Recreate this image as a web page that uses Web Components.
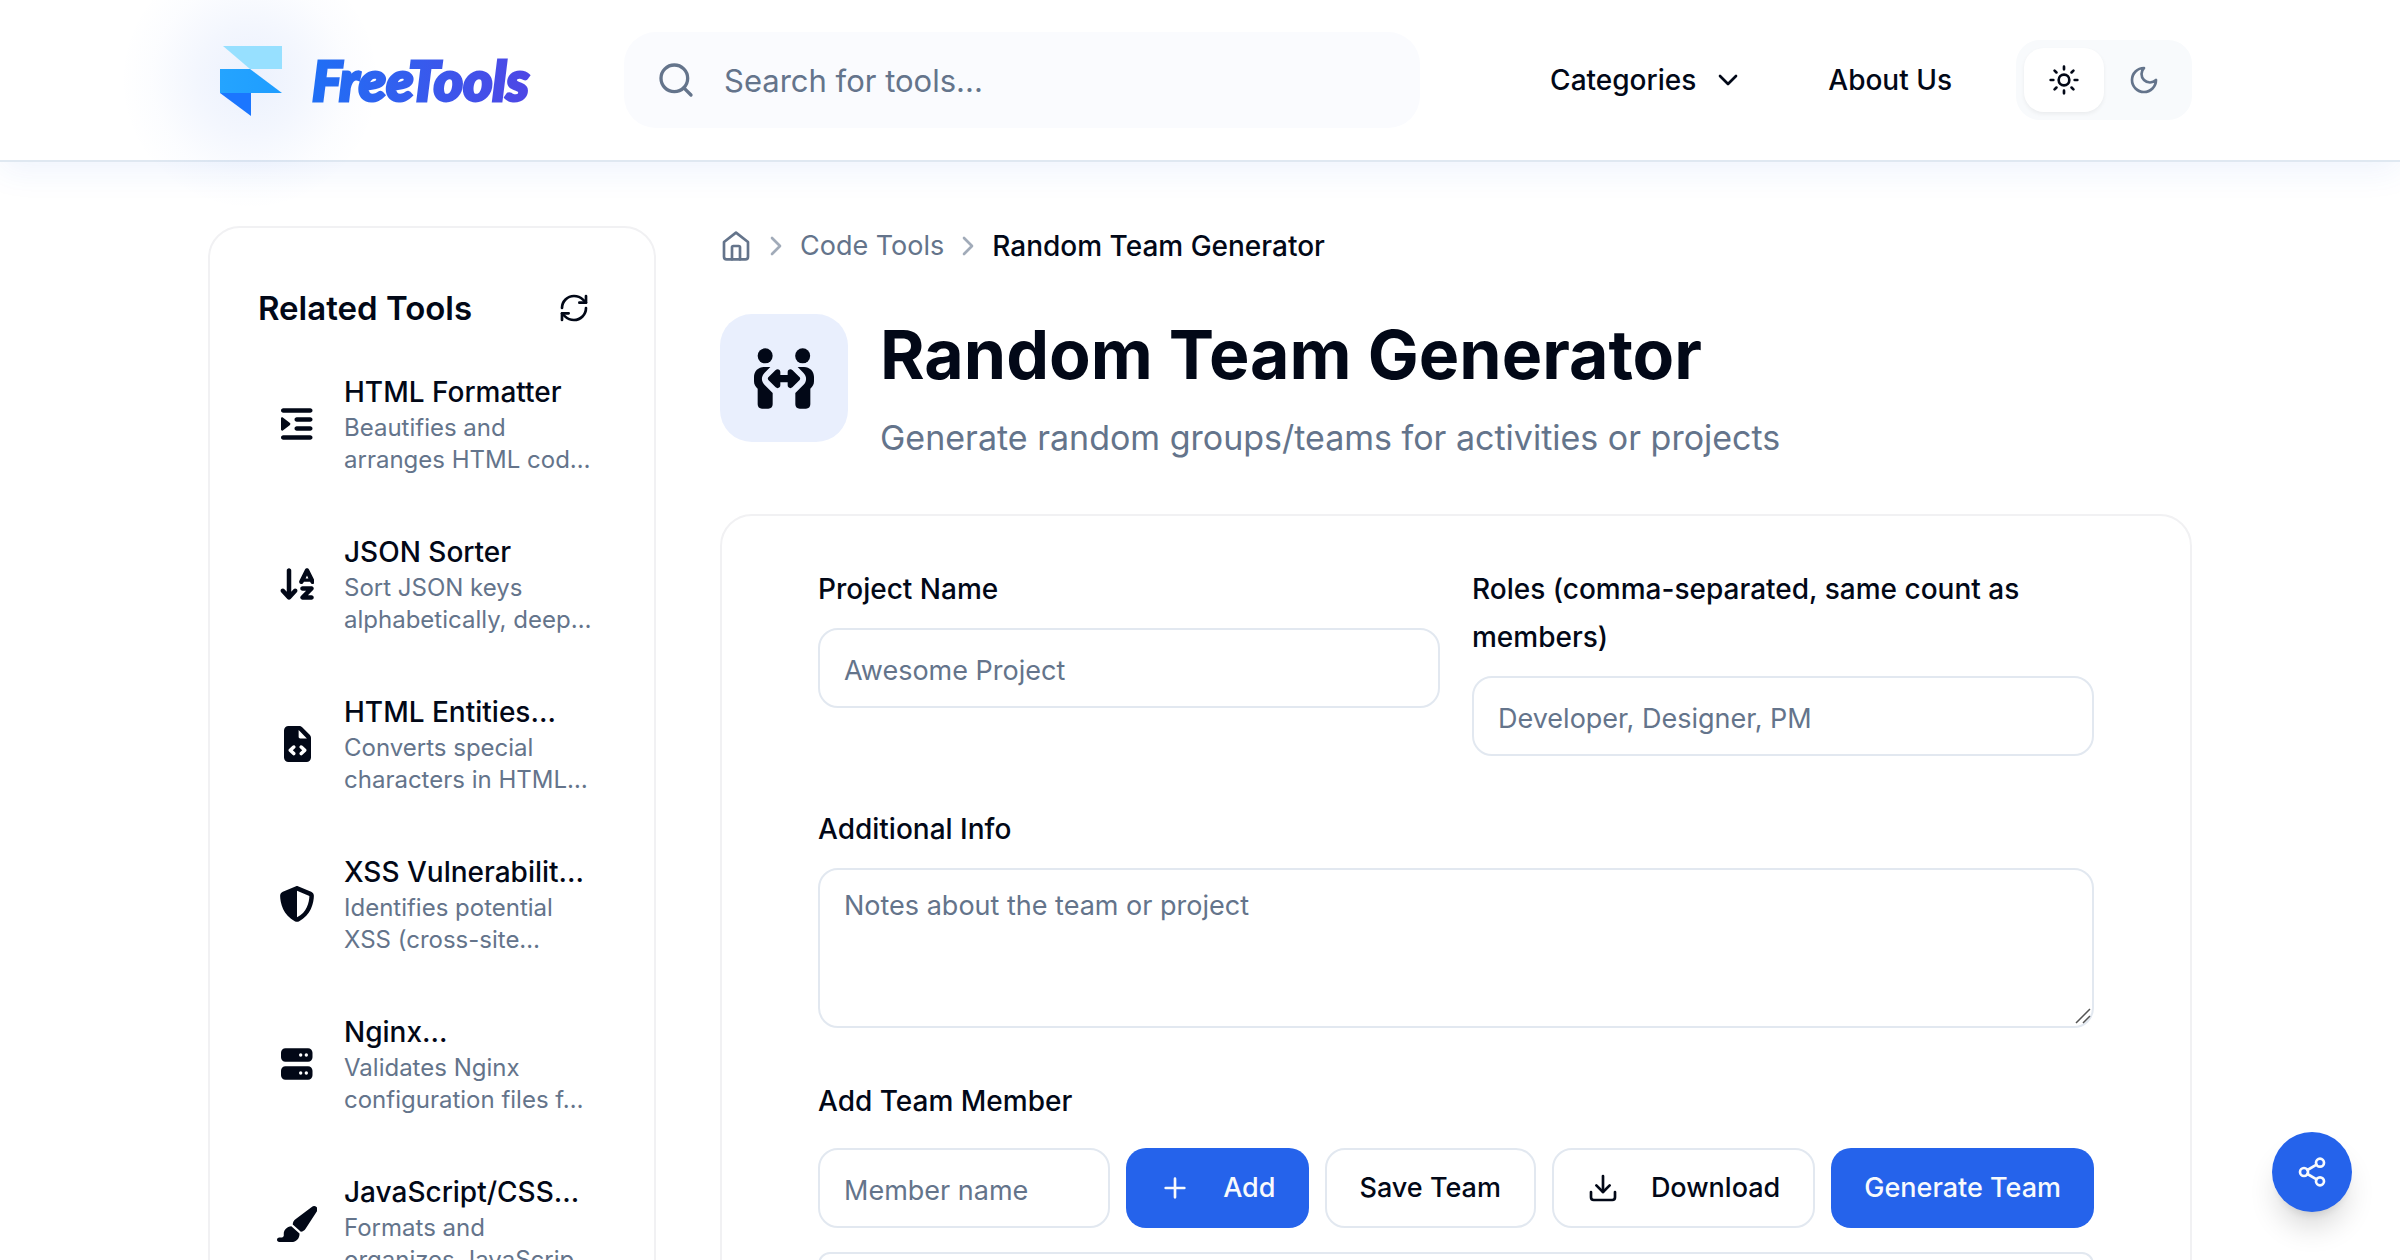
<!DOCTYPE html>
<html lang="en">

<head>
    <meta charset="UTF-8">
    <meta name="viewport" content="width=device-width, initial-scale=1.0">
    <title>Random Team Generator - FreeTools</title>
    <style>
        :root {
            --primary: #2563eb;
            --ink: #020817;
            --muted: #64748b;
            --line: #e2e8f0;
            --card-line: #f1f1f3;
        }

        body {
            margin: 0;
            font-family: Inter, "Liberation Sans", sans-serif;
            font-size: 32px;
            line-height: 48px;
            color: var(--ink);
            background: #fff;
        }

        main {
            display: grid;
            grid-template-columns: 448px minmax(0, 1fr);
            gap: 64px;
            align-items: start;
            box-sizing: border-box;
            max-width: 2048px;
            margin: 0 auto;
            padding: 64px 32px;
        }
    </style>
</head>

<body>

    <site-header></site-header>

    <main>
        <related-tools>
            <tool-item icon="indent">
                HTML Formatter
                <span slot="desc">Beautifies and<br>arranges HTML cod…</span>
            </tool-item>
            <tool-item icon="sort">
                JSON Sorter
                <span slot="desc">Sort JSON keys<br>alphabetically, deep…</span>
            </tool-item>
            <tool-item icon="file-code">
                HTML Entities…
                <span slot="desc">Converts special<br>characters in HTML…</span>
            </tool-item>
            <tool-item icon="shield">
                XSS Vulnerabilit…
                <span slot="desc">Identifies potential<br>XSS (cross-site…</span>
            </tool-item>
            <tool-item icon="server">
                Nginx…
                <span slot="desc">Validates Nginx<br>configuration files f…</span>
            </tool-item>
            <tool-item icon="brush">
                JavaScript/CSS…
                <span slot="desc">Formats and<br>organizes JavaScrip…</span>
            </tool-item>
        </related-tools>

        <tool-page>
            <bread-crumb></bread-crumb>
            <tool-heading icon="people">
                Random Team Generator
                <span slot="desc">Generate random groups/teams for activities or projects</span>
            </tool-heading>
            <team-form></team-form>
        </tool-page>
    </main>

    <share-button></share-button>

    <!-- header -->
    <template id="site-header-tpl">
        <style>
            * {
                box-sizing: border-box;
            }

            :host {
                display: block;
                position: relative;
                border-bottom: 2px solid #dfe8f1;
                box-shadow: 0 8px 32px rgba(37, 99, 235, .08);
            }

            header {
                display: flex;
                align-items: center;
                max-width: 2048px;
                height: 160px;
                margin: 0 auto;
                padding: 0 32px;
            }

            a {
                color: inherit;
                text-decoration: none;
            }

            .logo {
                position: relative;
                display: flex;
                align-items: center;
                gap: 24px;
                width: 416px;
                padding-left: 8px;
            }

            /* soft halo behind the mark */
            .logo::before {
                content: "";
                position: absolute;
                left: -88px;
                top: 50%;
                width: 260px;
                height: 260px;
                margin-top: -130px;
                border-radius: 50%;
                background: radial-gradient(closest-side, rgba(37, 99, 235, .09), rgba(37, 99, 235, .055) 40%, rgba(37, 99, 235, .015) 75%, rgba(37, 99, 235, 0));
                pointer-events: none;
            }

            .mark {
                position: relative;
                width: 72px;
                height: 72px;
            }

            .word {
                position: relative;
                padding-right: 4px;
                font: italic 900 56px/64px Lato, sans-serif;
                background: linear-gradient(90deg, #1f6ff5, #4f46e5);
                -webkit-background-clip: text;
                background-clip: text;
                -webkit-text-stroke: 3px transparent;
                color: transparent;
            }

            .search {
                display: flex;
                align-items: center;
                gap: 28px;
                flex: 0 1 796px;
                height: 96px;
                padding: 0 32px;
                border-radius: 32px;
                background: #fafbfe;
                color: var(--muted);
            }

            .search input {
                flex: 1;
                min-width: 0;
                padding: 2px 0 0;
                border: 0;
                outline: 0;
                background: none;
                font: inherit;
                font-size: 31px;
                color: var(--ink);
            }

            .search input::placeholder {
                color: var(--muted);
                opacity: 1;
            }

            nav {
                display: flex;
                align-items: center;
                margin-left: auto;
                font-size: 28px;
                line-height: 40px;
                font-weight: 500;
            }

            nav button {
                display: flex;
                align-items: center;
                gap: 16px;
                padding: 0;
                border: 0;
                background: none;
                font: inherit;
                color: inherit;
            }

            nav a {
                margin: 0 64px 0 84px;
            }

            .theme {
                display: flex;
                padding: 8px;
                border-radius: 24px;
                background: #f8fafc;
            }

            .theme button {
                justify-content: center;
                width: 80px;
                height: 64px;
                border-radius: 20px;
                color: var(--muted);
            }

            .theme button[aria-pressed=true] {
                background: #fff;
                color: var(--ink);
                box-shadow: 0 2px 4px rgba(0, 0, 0, .06);
            }
        </style>
        <header>
            <a class="logo" href="#">
                <svg class="mark" viewBox="0 0 72 72" aria-hidden="true">
                    <defs>
                        <linearGradient id="g" x1="0" x2="1">
                            <stop offset="0" stop-color="#24a4ff" />
                            <stop offset="1" stop-color="#1f9dff" />
                        </linearGradient>
                    </defs>
                    <path fill="#97e0ff" d="M7 2h59v23H34z" />
                    <path fill="url(#g)" d="M4 25h30l32 24H4z" />
                    <path fill="#1b76ff" d="M4 49h31v23z" />
                </svg>
                <span class="word">FreeTools</span>
            </a>
            <label class="search">
                <ft-icon name="search" style="--size: 40px"></ft-icon>
                <input type="search" placeholder="Search for tools..." aria-label="Search for tools">
            </label>
            <nav>
                <button type="button">Categories <ft-icon name="chevron-down"></ft-icon></button>
                <a href="#">About Us</a>
                <div class="theme">
                    <button type="button" aria-label="Light" aria-pressed="true"><ft-icon name="sun"></ft-icon></button>
                    <button type="button" aria-label="Dark" aria-pressed="false"><ft-icon name="moon"></ft-icon></button>
                </div>
            </nav>
        </header>
    </template>

    <!-- sidebar card -->
    <template id="related-tools-tpl">
        <style>
            :host {
                display: block;
                padding: 48px;
                border: 2px solid var(--card-line);
                border-radius: 32px;
                background: #fff;
            }

            .head {
                display: flex;
                align-items: center;
                justify-content: space-between;
                margin-bottom: 8px;
            }

            h2 {
                margin: 0;
                font-size: 33px;
                line-height: 40px;
                font-weight: 600;
            }

            button {
                display: flex;
                align-items: center;
                justify-content: center;
                width: 64px;
                height: 64px;
                padding: 0;
                border: 0;
                background: none;
                color: inherit;
            }

            .list {
                display: flex;
                flex-direction: column;
                gap: 8px;
            }
        </style>
        <div class="head">
            <h2>Related Tools</h2>
            <button type="button" aria-label="Refresh"><ft-icon name="refresh"></ft-icon></button>
        </div>
        <div class="list">
            <slot></slot>
        </div>
    </template>

    <template id="tool-item-tpl">
        <style>
            :host {
                display: block;
            }

            a {
                display: flex;
                align-items: center;
                gap: 24px;
                padding: 24px 16px;
                color: inherit;
                text-decoration: none;
                white-space: nowrap;
            }

            .icon {
                display: flex;
                flex: none;
                justify-content: center;
                width: 46px;
            }

            .title {
                font-size: 28px;
                line-height: 40px;
                font-weight: 500;
            }

            .desc {
                font-size: 24px;
                line-height: 32px;
                color: var(--muted);
            }
        </style>
        <a href="#">
            <span class="icon"><ft-icon style="--size: 36px"></ft-icon></span>
            <div>
                <div class="title"><slot></slot></div>
                <div class="desc"><slot name="desc"></slot></div>
            </div>
        </a>
    </template>

    <!-- main column -->
    <template id="tool-page-tpl">
        <style>
            :host {
                display: flex;
                flex-direction: column;
                gap: 48px;
                min-width: 0;
            }
        </style>
        <slot></slot>
    </template>

    <template id="bread-crumb-tpl">
        <style>
            :host {
                display: block;
                font-size: 27px;
                line-height: 40px;
                color: var(--muted);
            }

            nav {
                display: flex;
                align-items: center;
                gap: 8px;
            }

            a {
                display: flex;
                color: inherit;
                text-decoration: none;
            }

            .sep {
                opacity: .6;
            }

            .current {
                font-size: 28px;
                font-weight: 500;
                color: var(--ink);
            }
        </style>
        <nav aria-label="Breadcrumb">
            <a href="#" aria-label="Home"><ft-icon name="home"></ft-icon></a>
            <ft-icon class="sep" name="chevron-right"></ft-icon>
            <a href="#">Code Tools</a>
            <ft-icon class="sep" name="chevron-right"></ft-icon>
            <span class="current">Random Team Generator</span>
        </nav>
    </template>

    <template id="tool-heading-tpl">
        <style>
            :host {
                display: flex;
                align-items: flex-start;
                gap: 32px;
            }

            .tile {
                display: flex;
                align-items: center;
                justify-content: center;
                flex: none;
                width: 128px;
                height: 128px;
                border-radius: 32px;
                background: #e9effd;
            }

            h1 {
                margin: 0 0 16px;
                font-size: 68px;
                line-height: 80px;
                font-weight: 700;
            }

            p {
                margin: 0;
                font-size: 34px;
                line-height: 56px;
                color: var(--muted);
            }
        </style>
        <div class="tile"><ft-icon style="--size: 61px"></ft-icon></div>
        <div>
            <h1><slot></slot></h1>
            <p><slot name="desc"></slot></p>
        </div>
    </template>

    <!-- label + input / textarea -->
    <template id="form-field-tpl">
        <style>
            :host {
                display: block;
                min-width: 0;
            }

            label {
                font-size: 28px;
                line-height: 40px;
                font-weight: 500;
            }

            input,
            textarea {
                display: block;
                box-sizing: border-box;
                width: 100%;
                border: 2px solid var(--line);
                border-radius: 20px;
                background: #fff;
                font: inherit;
                font-size: 27px;
                line-height: 40px;
                color: var(--ink);
            }

            input {
                height: 80px;
                padding: 4px 24px 0;
            }

            textarea {
                height: 160px;
                padding: 16px 24px;
                resize: none;
            }

            .label {
                margin-bottom: 16px;
            }

            .box {
                position: relative;
            }

            /* resize grip in the textarea corner */
            .grip {
                position: absolute;
                right: 3px;
                bottom: 4px;
                width: 16px;
                height: 16px;
            }

            ::placeholder {
                color: var(--muted);
                opacity: 1;
            }
        </style>
    </template>

    <template id="ft-button-tpl">
        <style>
            :host {
                display: block;
            }

            button {
                display: flex;
                align-items: center;
                gap: 32px;
                box-sizing: border-box;
                height: 80px;
                padding: 0 33px;
                border: 2px solid var(--line);
                border-radius: 20px;
                background: #fff;
                font: inherit;
                font-size: 27px;
                line-height: 40px;
                font-weight: 500;
                color: var(--ink);
                white-space: nowrap;
            }

            :host([primary]) button {
                border: 0;
                background: var(--primary);
                color: #f8fafc;
            }
        </style>
        <button type="button"><slot name="icon"></slot><span><slot></slot></span></button>
    </template>

    <template id="team-form-tpl">
        <style>
            :host {
                display: block;
                padding: 48px 96px;
                border: 2px solid var(--card-line);
                border-radius: 32px;
                background: #fff;
            }

            form {
                display: flex;
                flex-direction: column;
                gap: 48px;
            }

            .two {
                display: grid;
                grid-template-columns: 1fr 1fr;
                gap: 32px;
            }

            .title {
                margin-bottom: 24px;
                font-weight: 500;
            }

            .title span {
                font-size: 28px;
                line-height: 40px;
            }

            .row {
                display: flex;
                gap: 16px;
            }

            .row form-field {
                flex: 1;
            }

            .members {
                height: 240px;
                margin-top: 24px;
                border: 2px solid var(--line);
                border-radius: 12px;
            }
        </style>
        <form>
            <div class="two">
                <form-field label="Project Name" placeholder="Awesome Project"></form-field>
                <form-field label="Roles (comma-separated, same count as members)" placeholder="Developer, Designer, PM"></form-field>
            </div>
            <form-field label="Additional Info" placeholder="Notes about the team or project" multiline></form-field>
            <div>
                <div class="title"><span>Add Team Member</span></div>
                <div class="row">
                    <form-field placeholder="Member name"></form-field>
                    <ft-button primary><ft-icon slot="icon" name="plus"></ft-icon>Add</ft-button>
                    <ft-button>Save Team</ft-button>
                    <ft-button><ft-icon slot="icon" name="download"></ft-icon>Download</ft-button>
                    <ft-button primary>Generate Team</ft-button>
                </div>
                <div class="members"></div>
            </div>
        </form>
    </template>

    <template id="share-button-tpl">
        <style>
            :host {
                position: fixed;
                right: 48px;
                bottom: 48px;
            }

            button {
                display: flex;
                align-items: center;
                justify-content: center;
                width: 80px;
                height: 80px;
                padding: 0;
                border: 0;
                border-radius: 50%;
                background: var(--primary);
                color: #f8fafc;
                box-shadow: 0 20px 30px -6px rgba(0, 0, 0, .16), 0 8px 12px -8px rgba(0, 0, 0, .16);
            }
        </style>
        <button type="button" aria-label="Share"><ft-icon name="share"></ft-icon></button>
    </template>

    <script>
        // line icons, drawn on a 24px grid
        const lineIcons = {
            'search': '<circle cx="11" cy="11" r="8"/><path d="m21 21-4.3-4.3"/>',
            'chevron-down': '<path d="m6 9 6 6 6-6"/>',
            'chevron-right': '<path d="m9 18 6-6-6-6"/>',
            'sun': '<circle cx="12" cy="12" r="4"/><path d="M12 2v2M12 20v2M4.93 4.93l1.41 1.41M17.66 17.66l1.41 1.41M2 12h2M20 12h2M6.34 17.66l-1.41 1.41M19.07 4.93l-1.41 1.41"/>',
            'moon': '<path d="M12 3a6 6 0 0 0 9 9 9 9 0 1 1-9-9Z"/>',
            'refresh': '<path d="M3 12a9 9 0 0 1 9-9 9.75 9.75 0 0 1 6.74 2.74L21 8"/><path d="M21 3v5h-5"/><path d="M21 12a9 9 0 0 1-9 9 9.75 9.75 0 0 1-6.74-2.74L3 16"/><path d="M8 16H3v5"/>',
            'home': '<path d="m3 9 9-7 9 7v11a2 2 0 0 1-2 2H5a2 2 0 0 1-2-2z"/><path d="M9 22V13a1 1 0 0 1 1-1h4a1 1 0 0 1 1 1v9"/>',
            'plus': '<path d="M5 12h14M12 5v14"/>',
            'download': '<path d="M21 15v4a2 2 0 0 1-2 2H5a2 2 0 0 1-2-2v-4"/><path d="m7 10 5 5 5-5"/><path d="M12 15V3"/>',
            'share': '<circle cx="18" cy="5" r="3"/><circle cx="6" cy="12" r="3"/><circle cx="18" cy="19" r="3"/><path d="m8.59 13.51 6.83 3.98M15.41 6.51l-6.82 3.98"/>'
        };

        // solid icons: [viewBox, paths]
        const solidIcons = {
            'indent': ['0 0 448 512', '<path d="M0 64C0 46.3 14.3 32 32 32h384c17.7 0 32 14.3 32 32s-14.3 32-32 32H32C14.3 96 0 81.7 0 64zM192 192c0-17.7 14.3-32 32-32h192c17.7 0 32 14.3 32 32s-14.3 32-32 32H224c-17.7 0-32-14.3-32-32zm32 96h192c17.7 0 32 14.3 32 32s-14.3 32-32 32H224c-17.7 0-32-14.3-32-32s14.3-32 32-32zM0 448c0-17.7 14.3-32 32-32h384c17.7 0 32 14.3 32 32s-14.3 32-32 32H32c-17.7 0-32-14.3-32-32zM127.8 268.6L25.8 347.9C15.3 356.1 0 348.6 0 335.3V176.7c0-13.3 15.3-20.8 25.8-12.6l101.9 79.3c8.2 6.4 8.2 18.9 0 25.3z"/>'],
            'sort': ['32 0 496 512', '<path d="M183.6 469.6C177.5 476.2 169 480 160 480s-17.5-3.8-23.6-10.4l-88-96c-11.9-13-11.1-33.3 2-45.2s33.3-11.1 45.2 2L128 365.7V64c0-17.7 14.3-32 32-32s32 14.3 32 32v301.7l32.4-35.4c11.9-13 32.2-13.9 45.2-2s13.9 32.2 2 45.2l-88 96zM320 320c0-17.7 14.3-32 32-32h128c12.9 0 24.6 7.8 29.6 19.8s2.2 25.7-6.9 34.9L429.3 416H480c17.7 0 32 14.3 32 32s-14.3 32-32 32H352c-12.9 0-24.6-7.8-29.6-19.8s-2.2-25.7 6.9-34.9L402.7 352H352c-17.7 0-32-14.3-32-32zM416 32c12.1 0 23.2 6.8 28.6 17.7l64 128 16 32c7.9 15.8 1.5 35-14.3 42.9s-35 1.5-42.9-14.3L460.2 224h-88.4l-7.2 14.3c-7.9 15.8-27.1 22.2-42.9 14.3s-22.2-27.1-14.3-42.9l16-32 64-128C392.8 38.8 403.9 32 416 32zM395.8 176h40.4L416 135.6 395.8 176z"/>'],
            'file-code': ['0 0 384 512', '<path fill-rule="evenodd" d="M64 0C28.7 0 0 28.7 0 64v384c0 35.3 28.7 64 64 64h256c35.3 0 64-28.7 64-64V170.5c0-17-6.7-33.3-18.7-45.3L258.7 18.7C246.7 6.7 230.5 0 213.5 0H64zM325.5 176H232c-13.3 0-24-10.7-24-24V58.5L325.5 176zM155.3 280c12 10 12 24 4 34l-34 32 34 32c8 10 8 24-4 34s-24 8-34-2l-50-46c-10-10-10-26 0-36l50-46c10-10 24-10 34-2zM228.7 280c-12 10-12 24-4 34l34 32-34 32c-8 10-8 24 4 34s24 8 34-2l50-46c10-10 10-26 0-36l-50-46c-10-10-24-10-34-2z"/>'],
            'shield': ['0 0 512 512', '<path d="M256 0c4.6 0 9.2 1 13.4 2.9L457.7 82.8c22 9.3 38.4 31 38.3 57.2c-.5 99.2-41.3 280.7-213.6 363.2c-16.7 8-36.1 8-52.8 0C57.3 420.7 16.5 239.2 16 140c-.1-26.2 16.3-47.9 38.3-57.2L242.7 2.9C246.8 1 251.4 0 256 0zm0 66.8V444.8C394 378 431.1 230.1 432 141.4L256 66.8z"/>'],
            'server': ['0 0 448 512', '<path fill-rule="evenodd" d="M64 32C28.7 32 0 60.7 0 96v64c0 35.3 28.7 64 64 64h320c35.3 0 64-28.7 64-64V96c0-35.3-28.7-64-64-64H64zm216 72a24 24 0 1 1 0 48 24 24 0 1 1 0-48zm56 24a24 24 0 1 1 48 0 24 24 0 1 1-48 0zM64 288c-35.3 0-64 28.7-64 64v64c0 35.3 28.7 64 64 64h320c35.3 0 64-28.7 64-64v-64c0-35.3-28.7-64-64-64H64zm216 72a24 24 0 1 1 0 48 24 24 0 1 1 0-48zm56 24a24 24 0 1 1 48 0 24 24 0 1 1-48 0z"/>'],
            'brush': ['0 0 576 512', '<path d="M339.3 367.1c27.3-3.9 51.9-19.4 67.2-42.9L568.2 74.1c12.6-19.5 9.4-45.3-7.6-61.2S517.7-4.4 499.1 9.6L262.4 187.2c-24 18-38.2 46.1-38.4 76.1L339.3 367.1zm-19.6 25.4l-116-104.4C143.9 290.3 96 339.6 96 400c0 3.9 .2 7.8 .6 11.6C98.4 429.1 86.4 448 68.8 448H32c-17.7 0-32 14.3-32 32s14.3 32 32 32h176c61.9 0 112-50.1 112-112c0-2.5-.1-5-.2-7.5z"/>'],
            'people': ['114 111 180 183', '<circle cx="147.5" cy="134.5" r="22.5"/><circle cx="260" cy="134.5" r="22.5"/><path d="M144 168h19l-17 17c-11 11-11 26 0 37l24 24v34c0 8-5 13-13 13h-19c-8 0-13-5-13-13v-47c-7-6-11-13-11-22v-13c0-17 13-30 30-30z"/><path d="M264 168h-19l17 17c11 11 11 26 0 37l-24 24v34c0 8 5 13 13 13h19c8 0 13-5 13-13v-47c7-6 11-13 11-22v-13c0-17-13-30-30-30z"/><path d="M157 199l22-22c5-5 14-2 14 6v9h22v-9c0-8 9-11 14-6l22 22c2 2 2 6 0 8l-22 22c-5 5-14 2-14-6v-9h-22v9c0 8-9 11-14 6l-22-22c-2-2-2-6 0-8z"/>']
        };

        // clones the template of the given id into an open shadow root
        function attachTemplate(el, id) {
            const tpl = document.getElementById(id).content;
            const root = el.attachShadow({ mode: 'open' });
            root.appendChild(tpl.cloneNode(true));
            return root;
        }

        class FtIcon extends HTMLElement {
            static observedAttributes = ['name'];

            constructor() {
                super();
                this.attachShadow({ mode: 'open' });
            }

            attributeChangedCallback() {
                const name = this.getAttribute('name');
                const style = '<style>:host { display: inline-flex; flex: none; } svg { display: block; height: var(--size, 32px); }</style>';
                let svg = '';
                if (lineIcons[name]) {
                    svg = `<svg viewBox="0 0 24 24" fill="none" stroke="currentColor" stroke-width="2" stroke-linecap="round" stroke-linejoin="round" aria-hidden="true">${lineIcons[name]}</svg>`;
                } else if (solidIcons[name]) {
                    const [box, paths] = solidIcons[name];
                    svg = `<svg viewBox="${box}" fill="currentColor" aria-hidden="true">${paths}</svg>`;
                }
                this.shadowRoot.innerHTML = style + svg;
            }
        }
        customElements.define('ft-icon', FtIcon);

        // elements that only need their template
        ['site-header', 'related-tools', 'tool-page', 'bread-crumb', 'ft-button', 'team-form', 'share-button'].forEach(tag => {
            customElements.define(tag, class extends HTMLElement {
                constructor() {
                    super();
                    attachTemplate(this, tag + '-tpl');
                }
            });
        });

        // elements that take an icon attribute
        ['tool-item', 'tool-heading'].forEach(tag => {
            customElements.define(tag, class extends HTMLElement {
                constructor() {
                    super();
                    attachTemplate(this, tag + '-tpl');
                }

                connectedCallback() {
                    this.shadowRoot.querySelector('ft-icon').setAttribute('name', this.getAttribute('icon'));
                }
            });
        });

        class FormField extends HTMLElement {
            constructor() {
                super();
                attachTemplate(this, 'form-field-tpl');
            }

            connectedCallback() {
                const text = this.getAttribute('label');
                const placeholder = this.getAttribute('placeholder');
                const multiline = this.hasAttribute('multiline');
                const control = document.createElement(multiline ? 'textarea' : 'input');
                const box = document.createElement('div');
                control.id = 'control';
                control.placeholder = placeholder;
                if (text) {
                    const line = document.createElement('div');
                    const label = document.createElement('label');
                    line.className = 'label';
                    label.htmlFor = 'control';
                    label.textContent = text;
                    line.appendChild(label);
                    this.shadowRoot.appendChild(line);
                } else {
                    control.setAttribute('aria-label', placeholder);
                }
                box.className = 'box';
                box.appendChild(control);
                if (multiline) {
                    box.insertAdjacentHTML('beforeend', '<svg class="grip" viewBox="0 0 16 16" fill="none" stroke="#555" stroke-width="1.5" aria-hidden="true"><path d="M1 15 15 1M8 15l7-7"/></svg>');
                }
                this.shadowRoot.appendChild(box);
            }
        }
        customElements.define('form-field', FormField);
    </script>
</body>

</html>
